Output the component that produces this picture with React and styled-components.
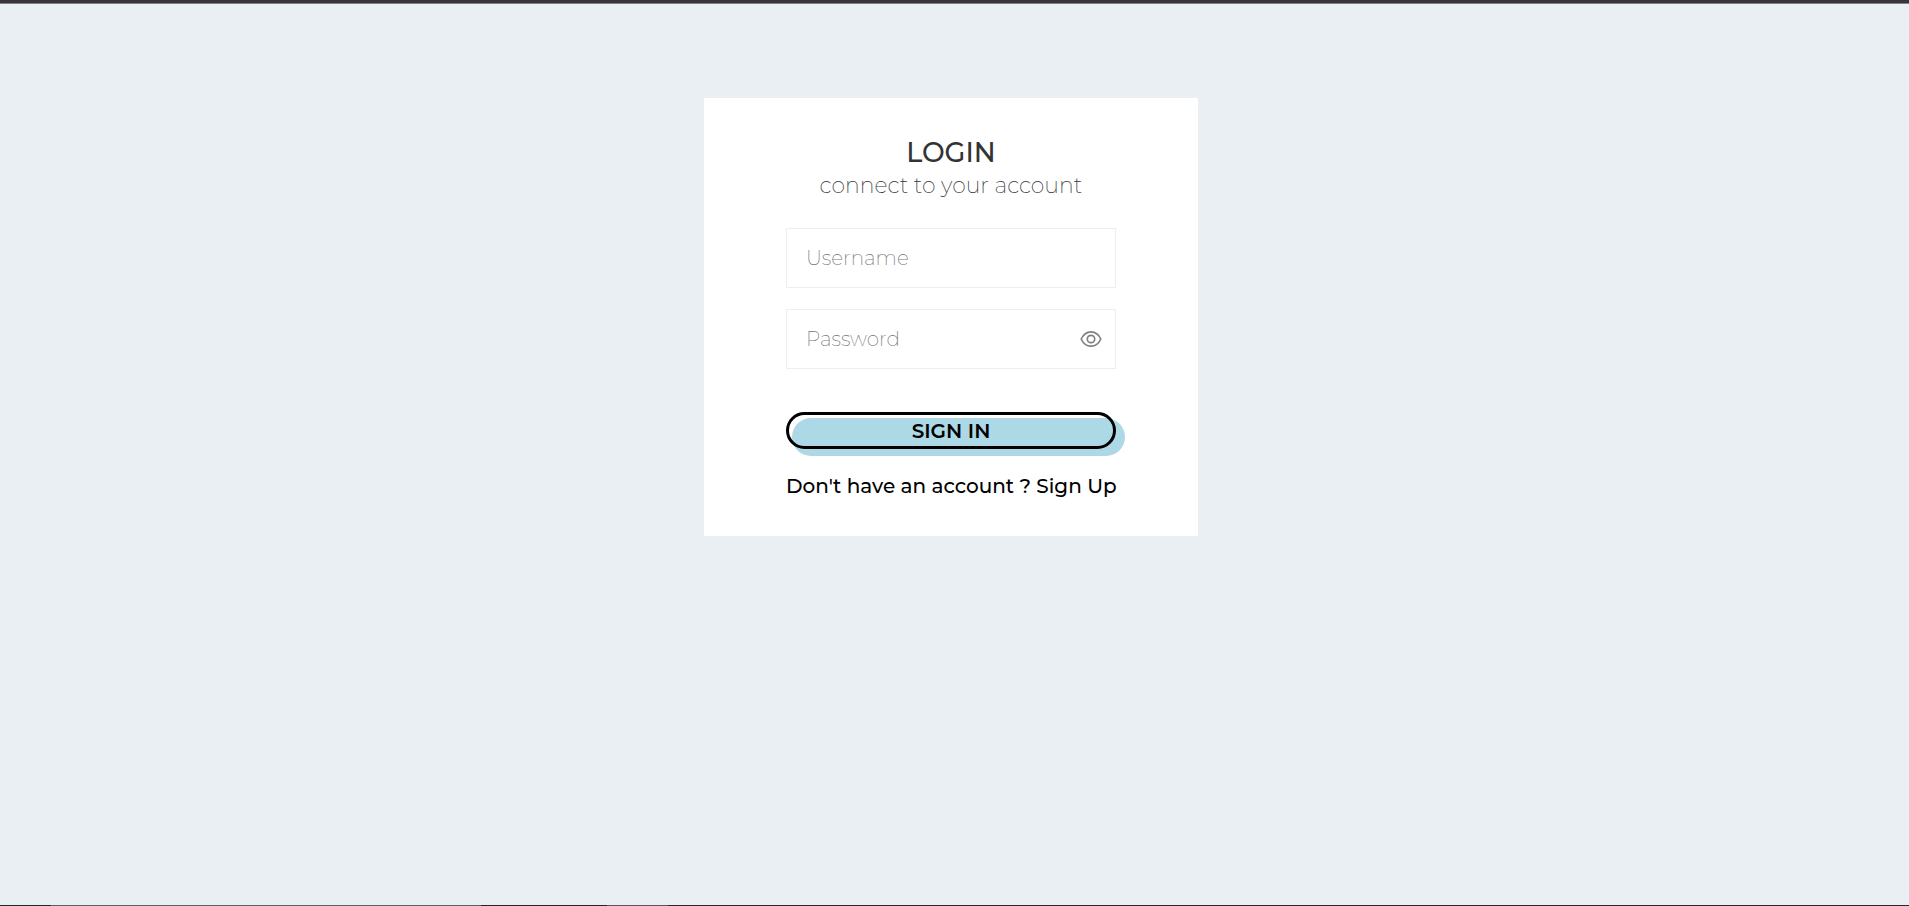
import React, { useState } from "react";
import styled, { createGlobalStyle } from "styled-components";

const GlobalStyle = createGlobalStyle`
  * { box-sizing: border-box; }
  body {
    margin: 0;
    background: #e9eff3;
    font-family: Montserrat, Inter, "Open Sans", sans-serif;
  }
`;

const Page = styled.div`
  min-height: 100vh;
  display: flex;
  flex-direction: column;
`;

const TopEdge = styled.div`
  height: 4px;
  background: #37353b;
  border-bottom: 1px solid #7f8388;
`;

const BottomEdge = styled.div`
  height: 1px;
  display: flex;
  background: #35202f;
`;

const EdgeMark = styled.span`
  flex: 0 0 ${(p) => p.$width};
  background: ${(p) => p.$color};
`;

const Main = styled.main`
  flex: 1;
  display: flex;
  justify-content: center;
  align-items: flex-start;
  padding: 94px 7px 0 0;
`;

const Card = styled.form`
  isolation: isolate;
  display: flex;
  flex-direction: column;
  align-items: stretch;
  width: 494px;
  max-width: 100%;
  padding: 38px 82px 35px;
  background: #fff;
`;

const Title = styled.h1`
  margin: 0;
  font-size: 27px;
  line-height: 34px;
  font-weight: 500;
  color: #333;
  text-align: center;
`;

const Subtitle = styled.p`
  margin: 0 0 26px;
  font-size: 22px;
  line-height: 32px;
  font-weight: 200;
  color: #333;
  text-align: center;
`;

const Field = styled.div`
  display: flex;
  align-items: center;
  height: 60px;
  margin-bottom: 21px;
  padding: 0 13px 0 19px;
  border: 1px solid #e9eff3;
`;

const Input = styled.input`
  flex: 1;
  min-width: 0;
  height: 100%;
  padding: 0;
  border: 0;
  outline: 0;
  background: transparent;
  font: 200 20px/24px Montserrat, Inter, sans-serif;
  color: #333;
  &::placeholder { color: #757575; opacity: 1; }
`;

const EyeButton = styled.button`
  display: flex;
  padding: 0;
  border: 0;
  background: none;
  color: #808080;
  cursor: pointer;
`;

const SignIn = styled.button`
  position: relative;
  height: 37px;
  margin-top: 22px;
  padding: 0;
  border: 3px solid #000;
  border-radius: 20px;
  background: transparent;
  font: 600 20px/24px Montserrat, Inter, sans-serif;
  color: #000;
  cursor: pointer;
  &::before {
    content: "";
    position: absolute;
    z-index: -1;
    top: 3px;
    left: 3px;
    right: -12px;
    bottom: -10px;
    border-radius: 20px;
    background: #add8e6;
  }
`;

const SignUp = styled.a`
  margin-top: 22px;
  font-size: 20px;
  line-height: 30px;
  font-weight: 500;
  color: #000;
  text-align: center;
  text-decoration: none;
  white-space: nowrap;
`;

function Eye() {
  return (
    <svg width="22" height="18" viewBox="0 0 22 18" fill="none" stroke="currentColor" strokeWidth="1.7" aria-hidden="true">
      <path d="M1.200 9C3.500 4 7 1.800 11 1.800S18.500 4 20.800 9C18.500 14 15 16.200 11 16.200S3.500 14 1.200 9Z" strokeLinejoin="round" />
      <circle cx="11" cy="9" r="3.700" />
    </svg>
  );
}

export default function App() {
  const [visible, setVisible] = useState(false);
  return (
    <Page>
      <GlobalStyle />
      <TopEdge />
      <Main>
        <Card onSubmit={(e) => e.preventDefault()}>
          <Title>LOGIN</Title>
          <Subtitle>connect to your account</Subtitle>
          <Field>
            <Input type="text" placeholder="Username" aria-label="Username" />
          </Field>
          <Field>
            <Input type={visible ? "text" : "password"} placeholder="Password" aria-label="Password" />
            <EyeButton type="button" aria-label="Show password" onClick={() => setVisible(!visible)}>
              <Eye />
            </EyeButton>
          </Field>
          <SignIn type="submit">SIGN IN</SignIn>
          <SignUp href="#signup">Don't have an account ? Sign Up</SignUp>
        </Card>
      </Main>
      <BottomEdge>
        <EdgeMark $width="51px" $color="#252333" />
        <EdgeMark $width="430px" $color="#606060" />
        <EdgeMark $width="126px" $color="#2b2032" />
        <EdgeMark $width="61px" $color="#5c5560" />
      </BottomEdge>
    </Page>
  );
}
